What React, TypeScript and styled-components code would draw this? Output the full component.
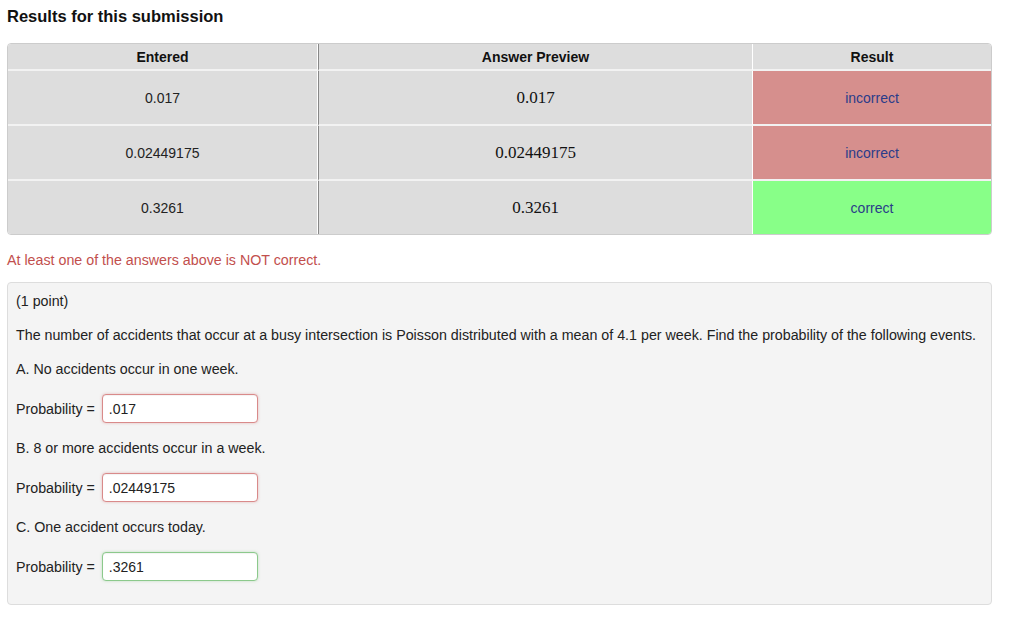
import styled, { createGlobalStyle } from 'styled-components';

type Verdict = 'correct' | 'incorrect';
type AnswerRow = { entered: string; preview: string; typed: string; verdict: Verdict };

const rows: AnswerRow[] = [
  { entered: '0.017', preview: '0.017', typed: '.017', verdict: 'incorrect' },
  { entered: '0.02449175', preview: '0.02449175', typed: '.02449175', verdict: 'incorrect' },
  { entered: '0.3261', preview: '0.3261', typed: '.3261', verdict: 'correct' },
];

const parts = [
  'A. No accidents occur in one week.',
  'B. 8 or more accidents occur in a week.',
  'C. One accident occurs today.',
];

const GlobalStyle = createGlobalStyle`
  html, body {
    margin: 0;
    padding: 0;
    background: #fff;
    font-family: "Liberation Sans", Arial, sans-serif;
    font-size: 14.25px;
    color: #222;
  }
`;

export default function App() {
  return (
    <>
      <GlobalStyle />
      <Page>
        <Title>Results for this submission</Title>
        <ResultsTable>
          <thead>
            <tr>
              <HeadCell>Entered</HeadCell>
              <HeadCell $divider>Answer Preview</HeadCell>
              <HeadCell>Result</HeadCell>
            </tr>
          </thead>
          <tbody>
            {rows.map((r) => (
              <tr key={r.entered}>
                <Cell>{r.entered}</Cell>
                <PreviewCell $divider>{r.preview}</PreviewCell>
                <VerdictCell $verdict={r.verdict}>{r.verdict}</VerdictCell>
              </tr>
            ))}
          </tbody>
        </ResultsTable>
        <Warning>At least one of the answers above is NOT correct.</Warning>
        <ProblemBox>
          <Para>(1 point)</Para>
          <Para>
            The number of accidents that occur at a busy intersection is Poisson distributed with a mean of 4.1 per
            week. Find the probability of the following events.
          </Para>
          {parts.map((p, i) => (
            <Part key={p}>
              <PartText>{p}</PartText>
              <AnswerLine>
                <span>Probability =</span>
                <AnswerInput $verdict={rows[i].verdict} defaultValue={rows[i].typed} readOnly />
              </AnswerLine>
            </Part>
          ))}
        </ProblemBox>
      </Page>
    </>
  );
}

const Page = styled.div`
  padding: 7px 32px 20px 7px;
`;

const Title = styled.h2`
  margin: 0 0 18px 0;
  font-size: 16.5px;
  font-weight: bold;
  color: #111;
  line-height: 18px;
`;

const ResultsTable = styled.table`
  width: 100%;
  border-collapse: separate;
  border-spacing: 0;
  border: 1px solid #ccc;
  border-radius: 4px;
  overflow: hidden;
  table-layout: fixed;

  th:nth-child(1),
  td:nth-child(1) {
    width: 309px;
  }
  th:nth-child(3),
  td:nth-child(3) {
    width: 238px;
  }
`;

const HeadCell = styled.th<{ $divider?: boolean }>`
  height: 25px;
  padding: 0;
  background: #ddd;
  font-size: 14px;
  font-weight: bold;
  color: #111;
  text-align: center;
  border-right: 1px solid #fff;
  border-bottom: 2px solid #f2f2f2;
  border-left: ${(p) => (p.$divider ? '1px solid #888' : '0')};
  &:last-child {
    border-right: 0;
  }
`;

const Cell = styled.td<{ $divider?: boolean }>`
  height: 53px;
  padding: 0;
  background: #ddd;
  text-align: center;
  font-size: 14px;
  color: #222;
  border-right: 1px solid #fff;
  border-bottom: 2px solid #f2f2f2;
  border-left: ${(p) => (p.$divider ? '1px solid #888' : '0')};
  tr:last-child & {
    border-bottom: 0;
  }
`;

const PreviewCell = styled(Cell)`
  font-family: "Liberation Serif", "Times New Roman", serif;
  font-size: 17px;
  color: #111;
`;

const VerdictCell = styled(Cell)<{ $verdict: Verdict }>`
  background: ${(p) => (p.$verdict === 'correct' ? '#8f8' : '#d68f8d')};
  color: #2a3c8a;
  border-right: 0;
`;

const Warning = styled.div`
  margin: 17px 0 14px 0;
  color: #c24f4d;
  line-height: 16px;
`;

const ProblemBox = styled.div`
  background: #f4f4f4;
  border: 1px solid #ddd;
  border-radius: 4px;
  padding: 10px 8px 23px 8px;
`;

const Para = styled.p`
  margin: 0 0 18px 0;
  line-height: 16px;
`;

const Part = styled.div`
  display: flex;
  flex-direction: column;
`;

const PartText = styled(Para)`
  margin-bottom: 17px;
`;

const AnswerLine = styled.div`
  display: flex;
  align-items: center;
  gap: 7px;
  margin: 0 0 17px 0;
  ${Part}:last-child & {
    margin-bottom: 0;
  }
`;

const AnswerInput = styled.input<{ $verdict: Verdict }>`
  width: 142px;
  height: 27px;
  box-sizing: content-box;
  padding: 0 6px;
  font-family: "Liberation Sans", Arial, sans-serif;
  font-size: 14px;
  color: #222;
  background: #fff;
  border-radius: 4px;
  outline: none;
  border: 1px solid ${(p) => (p.$verdict === 'correct' ? '#8cc98c' : '#d98a8a')};
  box-shadow: inset 0 1px 1px rgba(0, 0, 0, 0.05),
    0 0 3px ${(p) => (p.$verdict === 'correct' ? 'rgba(90,180,90,0.35)' : 'rgba(200,80,80,0.35)')};
`;
